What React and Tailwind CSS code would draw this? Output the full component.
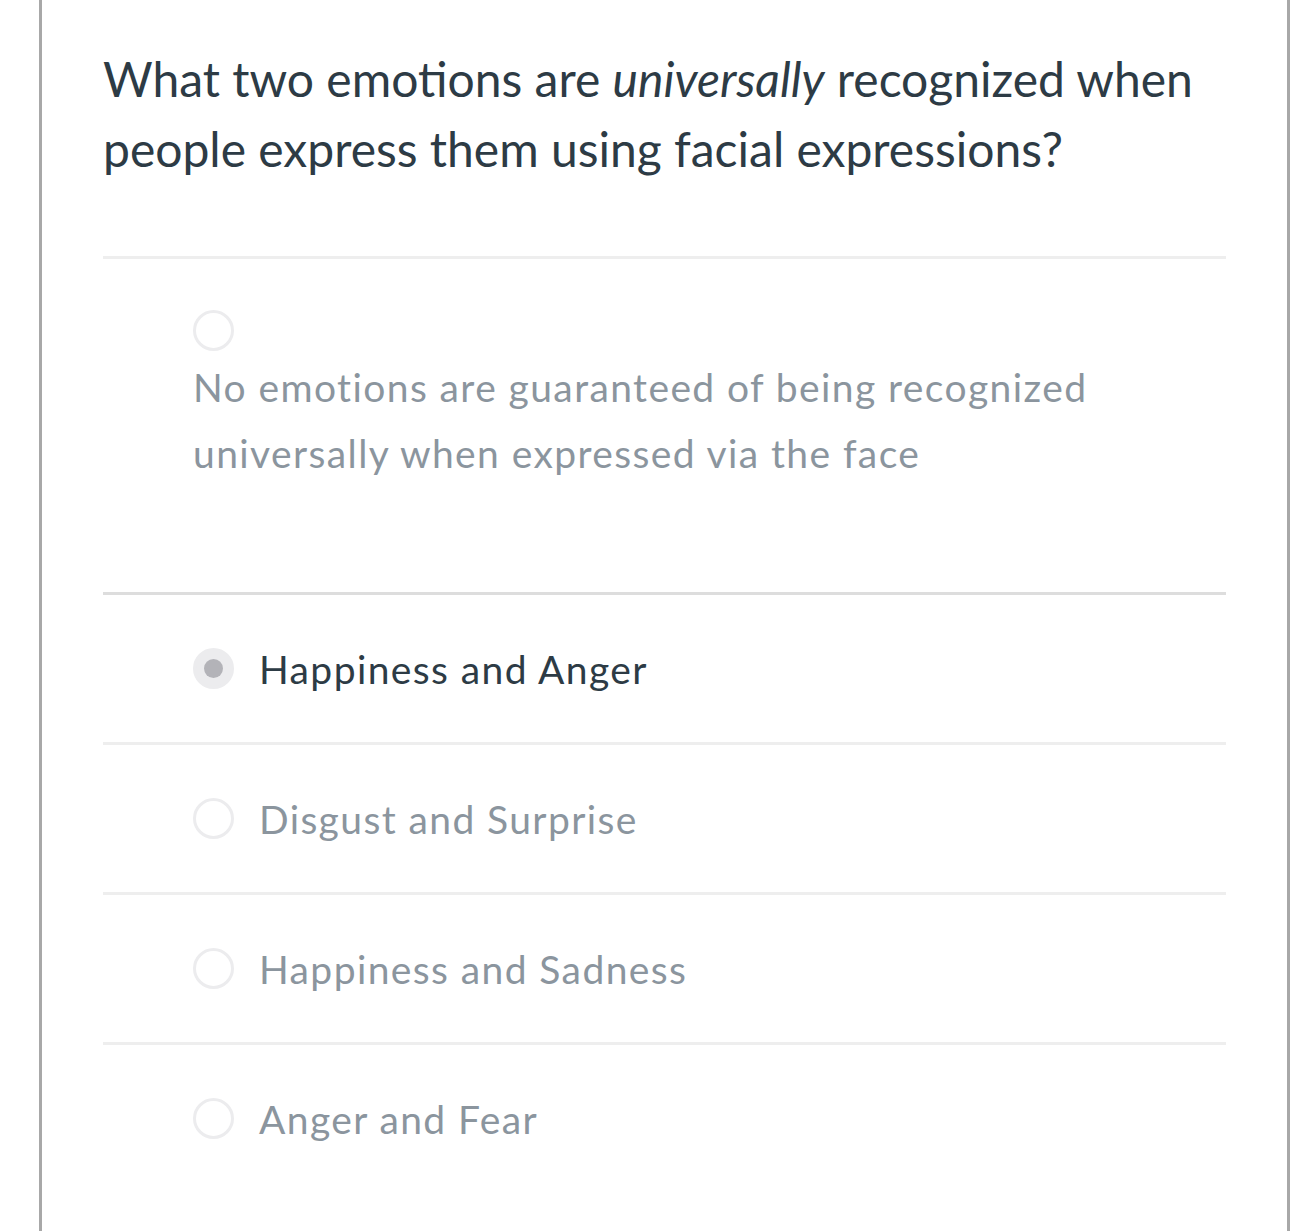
import React, { useState } from 'react';

const options = [
  { id: 'a', text: 'No emotions are guaranteed of being recognized universally when expressed via the face', stacked: true },
  { id: 'b', text: 'Happiness and Anger' },
  { id: 'c', text: 'Disgust and Surprise' },
  { id: 'd', text: 'Happiness and Sadness' },
  { id: 'e', text: 'Anger and Fear' },
];

const Radio = ({ checked }) => (
  <span
    className={
      'flex h-[41px] w-[41px] shrink-0 items-center justify-center rounded-full border-[3px] border-[#ececee] ' +
      (checked ? 'bg-[#ececee]' : 'bg-white')
    }
  >
    {checked && <span className="h-[19px] w-[19px] rounded-full bg-[#b3b3b8]" />}
  </span>
);

const App = () => {
  const [selected, setSelected] = useState('b');

  return (
    <div className="min-h-[1231px] bg-white pl-[39px]" style={{ fontFamily: 'Lato, "Noto Sans", sans-serif' }}>
      <div className="min-h-[1231px] border-x-[3px] border-[#a8a8a8] px-[61px] pt-[44px]">
        <h1 className="text-[48px] font-normal leading-[70px] text-[#2d3b45]">
          What two emotions are <em>universally</em> recognized when people express them using facial expressions?
        </h1>

        <div className="mt-[72px] h-[3px] bg-[#eeeeee]" />

        {options.map((opt, i) => {
          const checked = selected === opt.id;
          const color = checked ? 'text-[#2d3b45]' : 'text-[#8b959e]';
          return (
            <div key={opt.id}>
              {opt.stacked ? (
                <label
                  className="block cursor-pointer pl-[90px] pb-[106px] pt-[51px]"
                  onClick={() => setSelected(opt.id)}
                >
                  <Radio checked={checked} />
                  <span className={'mt-[3px] block pr-[60px] text-[39px] leading-[66px] tracking-[1.4px] ' + color}>
                    {opt.text}
                  </span>
                </label>
              ) : (
                <label
                  className="flex h-[147px] cursor-pointer items-center gap-[25px] pl-[90px]"
                  onClick={() => setSelected(opt.id)}
                >
                  <Radio checked={checked} />
                  <span className={'text-[39px] leading-[50px] tracking-[1.4px] ' + color}>{opt.text}</span>
                </label>
              )}
              {i < options.length - 1 && (
                <div className={'h-[3px] ' + (i === 0 ? 'bg-[#dddddd]' : 'bg-[#eeeeee]')} />
              )}
            </div>
          );
        })}
      </div>
    </div>
  );
};

export default App;
